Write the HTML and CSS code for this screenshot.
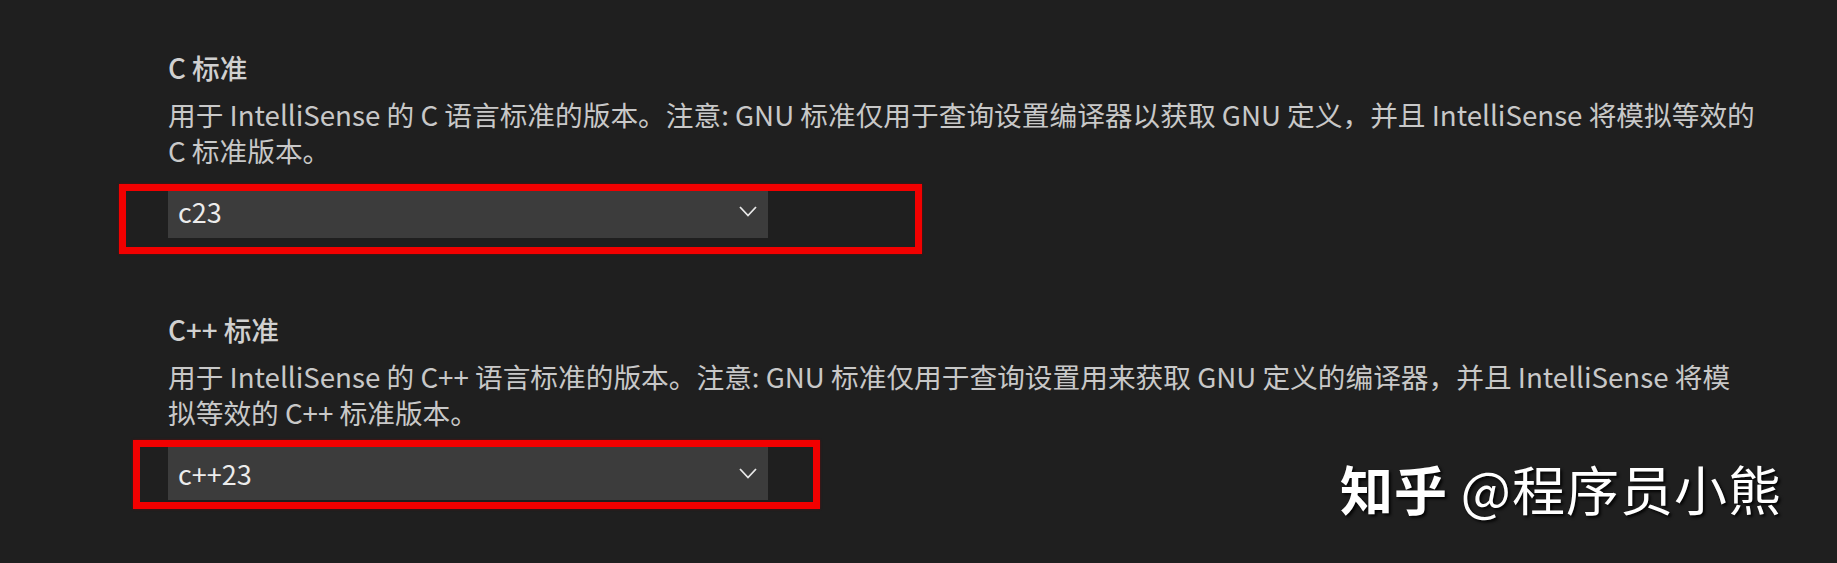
FILE: index.html
```html
<!DOCTYPE html>
<html lang="zh-CN">
<head>
    <meta charset="UTF-8" />
    <meta name="viewport" content="width=device-width, initial-scale=1.0"/>
    <title>C/C++ 设置</title>
    <link rel="stylesheet" href="styles.css">
</head>
<body>
    <div class="settings">
        <div class="setting">
            <div class="setting-title">C 标准</div>
            <div class="setting-desc">用于 IntelliSense 的 C 语言标准的版本。注意: GNU 标准仅用于查询设置编译器以获取 GNU 定义，并且 IntelliSense 将模拟等效的<br>C 标准版本。</div>
            <div class="select-wrap mark-c">
                <div class="select">
                    <span>c23</span>
                    <svg class="chevron" width="18" height="11" viewBox="0 0 18 11"><polyline points="1,1 9,9.5 17,1" fill="none" stroke="#e8e8e8" stroke-width="1.8"/></svg>
                </div>
            </div>
        </div>
        <div class="setting">
            <div class="setting-title">C++ 标准</div>
            <div class="setting-desc">用于 IntelliSense 的 C++ 语言标准的版本。注意: GNU 标准仅用于查询设置用来获取 GNU 定义的编译器，并且 IntelliSense 将模<br>拟等效的 C++ 标准版本。</div>
            <div class="select-wrap mark-cpp">
                <div class="select">
                    <span>c++23</span>
                    <svg class="chevron" width="18" height="11" viewBox="0 0 18 11"><polyline points="1,1 9,9.5 17,1" fill="none" stroke="#e8e8e8" stroke-width="1.8"/></svg>
                </div>
            </div>
        </div>
    </div>
    <div class="watermark"><span class="brand">知乎</span> @程序员小熊</div>
</body>
</html>
```
FILE: styles.css
```css
body {
    margin: 0;
    background-color: #1f1f1f;
    font-family: "Noto Sans CJK SC", "Noto Sans", sans-serif;
    color: #cccccc;
    height: 563px;
    overflow: hidden;
    position: relative;
}
.settings {
    padding: 49px 0 0 168px;
}
.setting {
    margin-bottom: 73px;
}
.setting-title {
    font-size: 27.7px;
    line-height: 36px;
    font-weight: 500;
    color: #d0d0d0;
}
.setting-desc {
    font-size: 27.7px;
    line-height: 36px;
    margin-top: 11px;
    color: #c8c8c8;
    white-space: nowrap;
}
.select-wrap {
    position: relative;
    width: 600px;
    margin-top: 16px;
}
.select {
    display: flex;
    align-items: center;
    justify-content: space-between;
    height: 54px;
    padding: 0 11px 0 10px;
    background-color: #3c3c3c;
    color: #ececec;
    font-size: 27px;
}
.chevron {
    display: block;
}
/* red annotation frames */
.select-wrap::after {
    content: "";
    position: absolute;
    border: 7px solid #f20000;
    box-shadow: 0 0 2px rgba(120, 0, 0, 0.8);
}
.mark-c::after {
    left: -49px;
    right: -154px;
    top: 0;
    bottom: -16px;
}
.mark-cpp::after {
    left: -35px;
    right: -52px;
    top: -6px;
    bottom: -9px;
}
.watermark {
    position: absolute;
    left: 1340px;
    top: 450px;
    font-size: 53px;
    font-weight: 400;
    color: #ffffff;
    letter-spacing: 1px;
    text-shadow: 2px 2px 3px rgba(0, 0, 0, 0.9);
}
.brand {
    font-weight: 700;
}
```
